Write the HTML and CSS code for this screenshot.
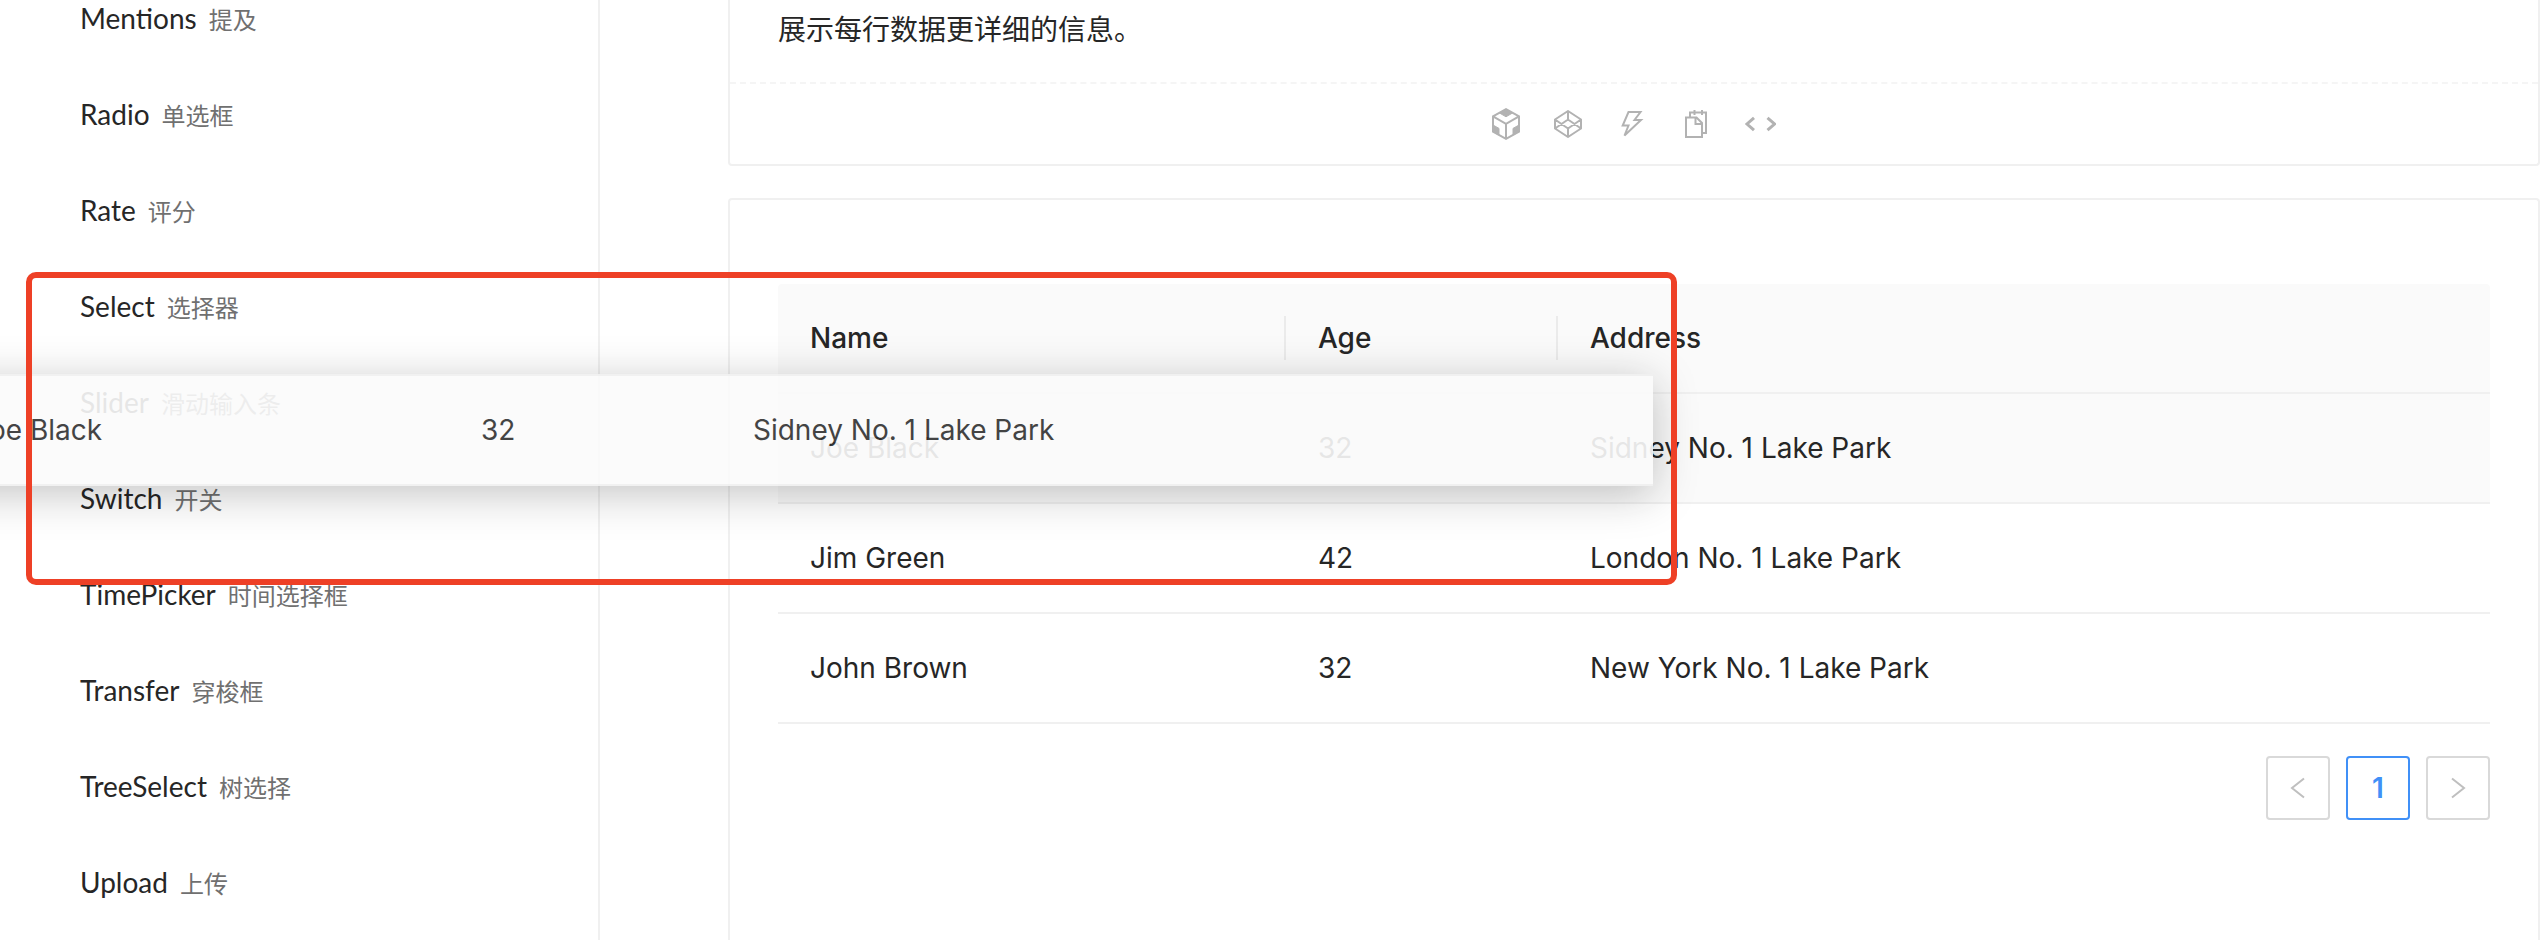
FILE: index.html
```html
<!DOCTYPE html>
<html lang="zh-CN">
<head>
<meta charset="utf-8">
<title>Table</title>
<link rel="stylesheet" href="styles.css">
</head>
<body>
<div class="page">
  <nav class="sidebar" aria-label="Components">
    <ul class="menu">
      <li><a class="menu-link" href="#mentions">Mentions<span class="menu-cn">提及</span></a></li>
      <li><a class="menu-link" href="#radio">Radio<span class="menu-cn">单选框</span></a></li>
      <li><a class="menu-link" href="#rate">Rate<span class="menu-cn">评分</span></a></li>
      <li><a class="menu-link" href="#select">Select<span class="menu-cn">选择器</span></a></li>
      <li><a class="menu-link" href="#slider">Slider<span class="menu-cn">滑动输入条</span></a></li>
      <li><a class="menu-link" href="#switch">Switch<span class="menu-cn">开关</span></a></li>
      <li><a class="menu-link" href="#timepicker">TimePicker<span class="menu-cn">时间选择框</span></a></li>
      <li><a class="menu-link" href="#transfer">Transfer<span class="menu-cn">穿梭框</span></a></li>
      <li><a class="menu-link" href="#treeselect">TreeSelect<span class="menu-cn">树选择</span></a></li>
      <li><a class="menu-link" href="#upload">Upload<span class="menu-cn">上传</span></a></li>
    </ul>
  </nav>

  <main class="content">
    <section class="card card-meta">
      <p class="description">展示每行数据更详细的信息。</p>
      <div class="actions">
        <button class="action action-first" type="button" aria-label="CodeSandbox">
          <svg width="28" height="32" viewBox="0 0 28 32" fill="none" stroke="currentColor" stroke-width="2">
            <path d="M14 1.2 27 8.4V23.6L14 30.8 1 23.6V8.4ZM1 8.4 14 15.8 27 8.4M14 15.8V30.8"/>
            <path d="M14 1.2 20.5 5 14 8.8 7.500 5ZM1 17 7 20.400V26.900L1 23.600ZM27 17 21 20.400V26.900L27 23.600Z" fill="currentColor" stroke-width="1"/>
          </svg>
        </button>
        <button class="action" type="button" aria-label="CodePen">
          <svg width="28" height="28" viewBox="0 0 28 28" fill="none" stroke="currentColor" stroke-width="2" stroke-linejoin="round">
            <path d="M14 1 27 9.500V18.500L14 27 1 18.500V9.500ZM14 1V9.500M14 18.500V27M1 9.500 14 18.500 27 9.500M1 18.500 14 9.500 27 18.500"/>
          </svg>
        </button>
        <button class="action" type="button" aria-label="StackBlitz">
          <svg width="28" height="28" viewBox="0 0 28 28" fill="none" stroke="currentColor" stroke-width="2">
            <path d="M10.500 2H22.500L16.500 10H23L6.500 25.500 10.500 15.500H4.700Z"/>
          </svg>
        </button>
        <button class="action" type="button" aria-label="Copy code">
          <svg width="28" height="28" viewBox="0 0 28 28" fill="none" stroke="currentColor" stroke-width="2">
            <path d="M4 7.500H14.500L20 13V27H4ZM13.500 7.500V14H20"/>
            <path d="M8 7V2.500H24V23H20M12.500 0V5M20 0V5"/>
          </svg>
        </button>
        <button class="action" type="button" aria-label="Show code">
          <svg width="32" height="28" viewBox="0 0 32 28" fill="none" stroke="currentColor" stroke-width="3">
            <path d="M10 7.800 3 14 10 20.200M23.500 7.800 30.500 14 23.500 20.200"/>
          </svg>
        </button>
      </div>
    </section>

    <section class="card card-demo">
      <table class="table">
        <colgroup><col class="col-name"><col class="col-age"><col></colgroup>
        <thead>
          <tr><th scope="col"><span class="th-text">Name</span></th><th scope="col"><span class="th-text">Age</span></th><th scope="col"><span class="th-text">Address</span></th></tr>
        </thead>
        <tbody>
          <tr class="row-hover"><td>Joe Black</td><td>32</td><td>Sidney No. 1 Lake Park</td></tr>
          <tr><td>Jim Green</td><td>42</td><td>London No. 1 Lake Park</td></tr>
          <tr><td>John Brown</td><td>32</td><td>New York No. 1 Lake Park</td></tr>
        </tbody>
      </table>
      <div class="pagination">
        <button class="page-btn" type="button" disabled aria-label="Previous page">
          <svg width="24" height="24" viewBox="0 0 24 24" fill="none" stroke="currentColor" stroke-width="2"><path d="M18 2.500 6 12 18 21.500"/></svg>
        </button>
        <button class="page-btn page-btn-active" type="button" aria-current="page">1</button>
        <button class="page-btn" type="button" disabled aria-label="Next page">
          <svg width="24" height="24" viewBox="0 0 24 24" fill="none" stroke="currentColor" stroke-width="2"><path d="M6 2.500 18 12 6 21.500"/></svg>
        </button>
      </div>
    </section>
  </main>

  <table class="table row-dragging">
    <colgroup><col class="col-name"><col class="col-age"><col></colgroup>
    <tbody>
      <tr><td>Joe Black</td><td>32</td><td>Sidney No. 1 Lake Park</td></tr>
    </tbody>
  </table>
  <div class="highlight"></div>
</div>
</body>
</html>
```
FILE: styles.css
```css
* { box-sizing: border-box; }

body {
  margin: 0;
  background: #fff;
  color: #262626;
  font-family: Inter, "Noto Sans CJK SC", sans-serif;
  font-size: 28px;
  line-height: 44px;
}

.page {
  position: relative;
  display: flex;
  height: 100vh;
  overflow: hidden;
}

/* Sidebar */
.sidebar {
  flex: none;
  width: 600px;
  border-right: 2px solid #f0f0f0;
}

.menu {
  margin: -28px 0 0;
  padding: 0;
  list-style: none;
}

.menu-link {
  display: flex;
  align-items: baseline;
  height: 96px;
  padding: 24px 0 0 80px;
  color: #262626;
  font-family: Lato, "Noto Sans CJK SC", sans-serif;
  text-decoration: none;
}

.menu-cn {
  margin-left: 12px;
  color: #707070;
  font-size: 24px;
}

/* Content */
.content {
  flex: 1;
  display: flex;
  flex-direction: column;
  gap: 32px;
  padding: 0 4px 0 128px;
}

.card { border: 2px solid #f0f0f0; }

.card-meta {
  border-top: 0;
  border-radius: 0 0 4px 4px;
}

.description {
  margin: 0;
  padding: 8px 48px 30px;
}

.actions {
  display: flex;
  justify-content: center;
  gap: 32px;
  padding: 24px 0;
  border-top: 2px dashed #f5f5f5;
}

.action {
  display: flex;
  align-items: center;
  justify-content: center;
  width: 32px;
  height: 32px;
  padding: 0;
  border: 0;
  background: none;
  color: #b2b2b2;
}

.action-first { width: 28px; }

.card-demo {
  flex: 1;
  padding: 84px 48px 0;
  border-bottom: 0;
  border-radius: 4px 4px 0 0;
}

/* Table */
.table {
  width: 100%;
  table-layout: fixed;
  border-collapse: separate;
  border-spacing: 0;
}

.col-name { width: 29.67%; }
.col-age { width: 15.89%; }

.table th,
.table td {
  padding: 32px;
  border-bottom: 2px solid #f0f0f0;
  text-align: left;
}

.table th {
  padding: 32px 0;
  background: #fafafa;
  font-weight: 500;
}

.table th:first-child { border-top-left-radius: 4px; }
.table th:last-child { border-top-right-radius: 4px; }

.th-text {
  display: block;
  padding-left: 32px;
  border-right: 2px solid #ebebeb;
}

.table th:last-child .th-text { border-right: 0; }
.row-hover td { background: #fafafa; }

/* Pagination */
.pagination {
  display: flex;
  justify-content: flex-end;
  gap: 16px;
  margin-top: 32px;
}

.page-btn {
  display: flex;
  align-items: center;
  justify-content: center;
  width: 64px;
  height: 64px;
  padding: 0;
  border: 2px solid #d9d9d9;
  border-radius: 4px;
  background: #fff;
  color: #bfbfbf;
  font: inherit;
  font-weight: 600;
}

.page-btn-active {
  border-color: #4090f7;
  color: #4090f7;
}

/* Row following the pointer */
.row-dragging {
  position: absolute;
  top: 374px;
  left: -59px;
  width: calc(100% - 832px);
  background: #fbfbfb;
  color: #303030;
  opacity: 0.9;
  box-shadow: 0 8px 44px rgba(0, 0, 0, 0.26);
}

.row-dragging td { border-top: 2px solid #f0f0f0; }

/* Annotation frame */
.highlight {
  position: absolute;
  top: 272px;
  left: 26px;
  width: 1651px;
  height: 313px;
  border: 6px solid #ee4026;
  border-radius: 10px;
  pointer-events: none;
}
```
